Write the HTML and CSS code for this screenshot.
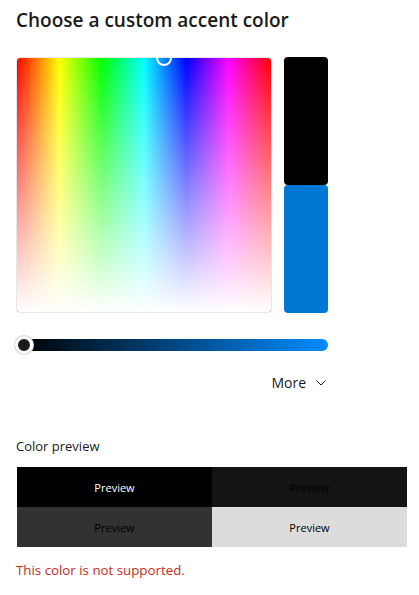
FILE: index.html
```html
<!DOCTYPE html>
<html lang="en">

<head>
    <meta charset="UTF-8">
    <meta name="viewport" content="width=device-width, initial-scale=1.0">
    <title>Custom accent color</title>
    <link rel="stylesheet" href="styles.css">
</head>

<body>
    <div class="dialog">
        <h1 class="title">Choose a custom accent color</h1>

        <div class="picker">
            <div class="spectrum">
                <div class="spectrum-fade"></div>
                <span class="spectrum-thumb"></span>
            </div>
            <div class="swatches">
                <div class="swatch swatch-new"></div>
                <div class="swatch swatch-old"></div>
            </div>
        </div>

        <div class="value-slider">
            <div class="value-track"></div>
            <span class="value-thumb"></span>
        </div>

        <div class="more-row">
            <button class="more-btn">More
                <svg width="10" height="6" viewBox="0 0 10 6">
                    <path d="M0.5 0.5 L5 5 L9.5 0.5" fill="none" stroke="#1a1a1a" stroke-width="1"/>
                </svg>
            </button>
        </div>

        <h2 class="section-label">Color preview</h2>
        <div class="preview-grid">
            <div class="cell cell-black">Preview</div>
            <div class="cell cell-darker">Preview</div>
            <div class="cell cell-dark">Preview</div>
            <div class="cell cell-light">Preview</div>
        </div>

        <p class="error">This color is not supported.</p>
    </div>
</body>

</html>
```

FILE: styles.css
```css
body {
    font-family: "Open Sans", "Noto Sans", sans-serif;
    margin: 0;
    background-color: #fff;
    color: #1a1a1a;
}

.dialog {
    padding: 6px 12px 0 16px;
}

.title {
    font-size: 19px;
    font-weight: 600;
    line-height: 28px;
    margin: 0 0 23px;
}

.picker {
    display: flex;
    gap: 12px;
}

.spectrum {
    position: relative;
    width: 256px;
    height: 256px;
    box-sizing: border-box;
    border: 1px solid #e6e6e6;
    border-radius: 4px;
    background: linear-gradient(to right, #f00, #ff0, #0f0, #0ff, #00f, #f0f, #f00);
}

.spectrum-fade {
    height: 100%;
    border-radius: 3px;
    background: linear-gradient(to bottom, rgba(255, 255, 255, 0), #fff);
}

/* ring sits half above the box */
.spectrum-thumb {
    position: absolute;
    left: 139px;
    top: -8px;
    width: 12px;
    height: 12px;
    border: 2px solid #fff;
    border-radius: 50%;
}

.swatches {
    display: flex;
    flex-direction: column;
    width: 44px;
}

.swatch {
    flex: 1;
    border-radius: 4px;
}

.swatch-new {
    background-color: #000;
}

.swatch-old {
    background-color: #0078d4;
}

.value-slider {
    position: relative;
    width: 312px;
    margin-top: 26px;
}

.value-track {
    height: 12px;
    border-radius: 6px;
    background: linear-gradient(to right, #000, #008cff);
}

.value-thumb {
    position: absolute;
    left: -1px;
    top: -3px;
    width: 12px;
    height: 12px;
    border: 3px solid #fff;
    border-radius: 50%;
    background-color: #1c1c1c;
    box-shadow: 0 0 0 1px #d6d6d6;
}

.more-row {
    display: flex;
    justify-content: flex-end;
    width: 312px;
    margin-top: 22px;
}

.more-btn {
    display: flex;
    align-items: center;
    gap: 10px;
    padding: 0 2px 0 0;
    border: none;
    background: none;
    font-family: inherit;
    font-size: 14px;
    line-height: 20px;
    color: #1a1a1a;
}

.section-label {
    font-size: 13px;
    font-weight: 400;
    line-height: 20px;
    margin: 43px 0 11px;
}

.preview-grid {
    display: grid;
    grid-template-columns: 195px 195px;
    grid-auto-rows: 40px;
    margin-left: 1px;
}

.cell {
    display: flex;
    align-items: center;
    justify-content: center;
    font-size: 11px;
    color: #000;
}

.cell-black {
    background-color: #000;
    color: #fff;
}

.cell-darker {
    background-color: #141414;
}

.cell-dark {
    background-color: #323232;
}

.cell-light {
    background-color: #dcdcdc;
}

.error {
    font-size: 13.3px;
    line-height: 20px;
    color: #c42b1c;
    margin: 13px 0 0;
}
```
